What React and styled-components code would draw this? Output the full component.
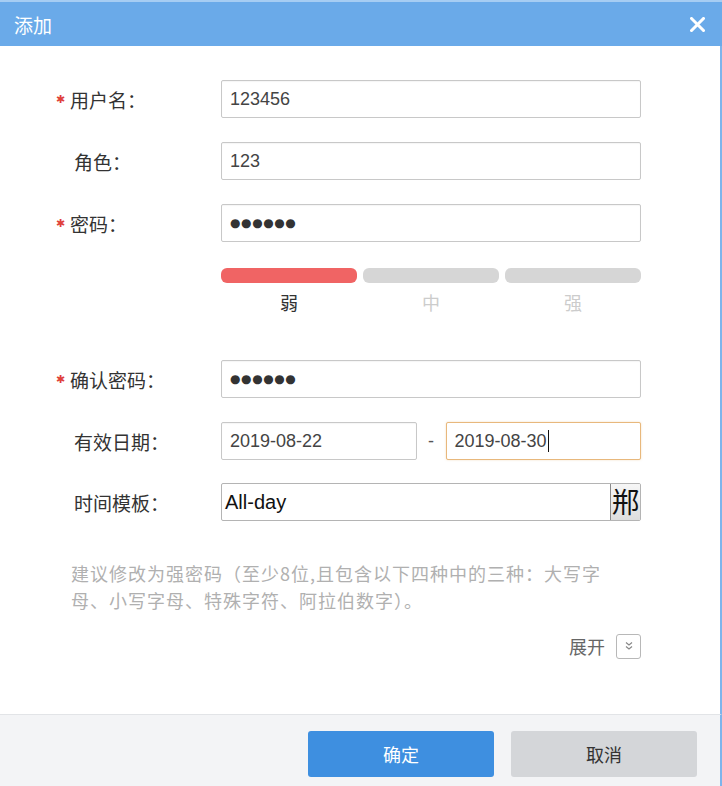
import React from 'react';
import { styled, createGlobalStyle } from 'styled-components';

const GlobalStyle = createGlobalStyle`
  html, body {
    margin: 0;
    padding: 0;
    background: #ffffff;
  }
  * {
    box-sizing: border-box;
  }
`;

const CJK = `"Noto Sans CJK SC", "Liberation Sans", sans-serif`;
const LATIN = `"Liberation Sans", "Noto Sans CJK SC", sans-serif`;

const Dialog = styled.div`
  width: 722px;
  height: 786px;
  display: flex;
  flex-direction: column;
  font-family: ${CJK};
  background: #fff;
  overflow: hidden;
`;

const Header = styled.div`
  height: 46px;
  flex-shrink: 0;
  display: flex;
  align-items: center;
  justify-content: space-between;
  padding: 0 15px 0 14px;
  background: #6aaae9;
  border-top: 2px solid #a6cdf3;
`;

const Title = styled.span`
  color: #fff;
  font-size: 19px;
  line-height: 1;
`;

const CloseBtn = styled.button`
  width: 20px;
  height: 20px;
  padding: 0;
  border: none;
  background: none;
  display: flex;
  align-items: center;
  justify-content: center;
  cursor: pointer;
`;

const Body = styled.div`
  flex: 1;
  padding: 34px 0 0 56px;
  border-right: 2px solid #7db4eb;
  display: flex;
  flex-direction: column;
`;

const Row = styled.div`
  display: flex;
  align-items: center;
  height: 38px;
  margin-bottom: ${(p) => p.$gap ?? 24}px;
`;

const Label = styled.div`
  width: 165px;
  flex-shrink: 0;
  display: flex;
  align-items: center;
  padding-left: ${(p) => (p.$required ? 0 : 18)}px;
  font-size: 19px;
  color: #333;
`;

const Star = styled.span`
  width: 14px;
  color: #e0413b;
  font-size: 11px;
  line-height: 1;
  margin-top: -2px;
`;

const Field = styled.div`
  width: ${(p) => (p.$flex ? 'auto' : '420px')};
  flex: ${(p) => (p.$flex ? 1 : 'none')};
  height: 38px;
  display: flex;
  align-items: center;
  padding-left: 8px;
  border: 1px solid ${(p) => (p.$focus ? '#e8b87c' : '#c8c8c8')};
  border-radius: 2px;
  box-shadow: ${(p) => (p.$focus ? '0 0 2px rgba(232, 184, 124, 0.5)' : 'inset 0 1px 1px rgba(0,0,0,0.04)')};
  font-family: ${LATIN};
  font-size: 18px;
  color: #444;
  background: #fff;
  overflow: hidden;
`;

const Dots = styled.span`
  font-family: "DejaVu Sans", sans-serif;
  font-size: 12px;
  color: #333;
  letter-spacing: 0.6px;
`;

const Caret = styled.span`
  display: inline-block;
  width: 1px;
  height: 22px;
  margin-left: 1px;
  background: #111;
`;

const DateGroup = styled.div`
  width: 420px;
  display: flex;
  align-items: center;
`;

const Dash = styled.span`
  width: 29px;
  text-align: center;
  font-family: ${LATIN};
  font-size: 18px;
  color: #555;
`;

const Select = styled.div`
  width: 420px;
  height: 38px;
  display: flex;
  border: 1px solid #b4b4b4;
  border-radius: 2px;
  overflow: hidden;
  background: #fff;
`;

const SelectText = styled.span`
  flex: 1;
  display: flex;
  align-items: center;
  padding-left: 3px;
  font-family: ${LATIN};
  font-size: 20px;
  color: #111;
`;

const SelectButton = styled.span`
  width: 30px;
  flex-shrink: 0;
  display: flex;
  justify-content: center;
  border-left: 1px solid #8a8a8a;
  background: linear-gradient(#f6f6f6, #dedede);
  font-size: 28px;
  line-height: 34px;
  color: #111;
  overflow: hidden;
`;

const Strength = styled.div`
  margin-left: 165px;
  width: 420px;
  margin-bottom: 45px;
`;

const Bars = styled.div`
  display: grid;
  grid-template-columns: repeat(3, 1fr);
  gap: 6px;
`;

const Bar = styled.div`
  height: 15px;
  border-radius: 6px;
  background: ${(p) => (p.$active ? '#f06464' : '#d6d6d6')};
`;

const Levels = styled.div`
  display: grid;
  grid-template-columns: repeat(3, 1fr);
  gap: 6px;
  margin-top: 6px;
`;

const Level = styled.span`
  text-align: center;
  font-size: 18px;
  line-height: 26px;
  color: ${(p) => (p.$active ? '#333' : '#cccccc')};
`;

const Hint = styled.div`
  margin: 39px 0 0 15px;
  font-size: 18px;
  letter-spacing: 1px;
  line-height: 27px;
  color: #b0b0b0;
`;

const HintLine = styled.div`
  white-space: nowrap;
`;

const ExpandRow = styled.div`
  width: 585px;
  display: flex;
  justify-content: flex-end;
  align-items: center;
  gap: 11px;
  margin-top: 19px;
  font-size: 18px;
  color: #666;
`;

const ExpandBox = styled.span`
  width: 25px;
  height: 25px;
  display: flex;
  align-items: center;
  justify-content: center;
  border: 1px solid #b8b8b8;
  border-radius: 3px;
`;

const Footer = styled.div`
  height: 72px;
  flex-shrink: 0;
  display: flex;
  justify-content: flex-end;
  align-items: center;
  gap: 17px;
  padding: 6px 23px 0 0;
  background: #f3f4f6;
  border-top: 1px solid #e2e4e7;
  border-right: 2px solid #7db4eb;
`;

const Button = styled.button`
  width: 186px;
  height: 46px;
  border: none;
  border-radius: 3px;
  font-family: ${CJK};
  font-size: 18px;
  color: ${(p) => (p.$primary ? '#fff' : '#333')};
  background: ${(p) => (p.$primary ? '#3e8fe0' : '#d4d6d9')};
  cursor: pointer;
`;

const FormRow = ({ label, required, gap, children }) => (
  <Row $gap={gap}>
    <Label $required={required}>
      {required && <Star>✱</Star>}
      {label}
    </Label>
    {children}
  </Row>
);

const App = () => {
  return (
    <>
      <GlobalStyle />
      <Dialog>
        <Header>
          <Title>添加</Title>
          <CloseBtn aria-label="close">
            <svg width="15" height="15" viewBox="0 0 15 15">
              <path d="M1.5 1.5 L13.5 13.5 M13.5 1.5 L1.5 13.5" stroke="#fff" strokeWidth="3" strokeLinecap="square" />
            </svg>
          </CloseBtn>
        </Header>
        <Body>
          <FormRow label="用户名：" required>
            <Field>123456</Field>
          </FormRow>
          <FormRow label="角色：">
            <Field>123</Field>
          </FormRow>
          <FormRow label="密码：" required gap={26}>
            <Field><Dots>●●●●●●</Dots></Field>
          </FormRow>
          <Strength>
            <Bars>
              <Bar $active />
              <Bar />
              <Bar />
            </Bars>
            <Levels>
              <Level $active>弱</Level>
              <Level>中</Level>
              <Level>强</Level>
            </Levels>
          </Strength>
          <FormRow label="确认密码：" required>
            <Field><Dots>●●●●●●</Dots></Field>
          </FormRow>
          <FormRow label="有效日期：" gap={23}>
            <DateGroup>
              <Field $flex>2019-08-22</Field>
              <Dash>-</Dash>
              <Field $flex $focus>2019-08-30<Caret /></Field>
            </DateGroup>
          </FormRow>
          <FormRow label="时间模板：" gap={0}>
            <Select>
              <SelectText>All-day</SelectText>
              <SelectButton>郱</SelectButton>
            </Select>
          </FormRow>
          <Hint>
            <HintLine>建议修改为强密码（至少8位,且包含以下四种中的三种：大写字</HintLine>
            <HintLine>母、小写字母、特殊字符、阿拉伯数字）。</HintLine>
          </Hint>
          <ExpandRow>
            展开
            <ExpandBox>
              <svg width="10" height="10" viewBox="0 0 10 10">
                <path d="M2 1.5 L5 4 L8 1.5 M2 5.5 L5 8 L8 5.5" fill="none" stroke="#888" strokeWidth="1.2" />
              </svg>
            </ExpandBox>
          </ExpandRow>
        </Body>
        <Footer>
          <Button $primary>确定</Button>
          <Button>取消</Button>
        </Footer>
      </Dialog>
    </>
  );
};

export default App;
